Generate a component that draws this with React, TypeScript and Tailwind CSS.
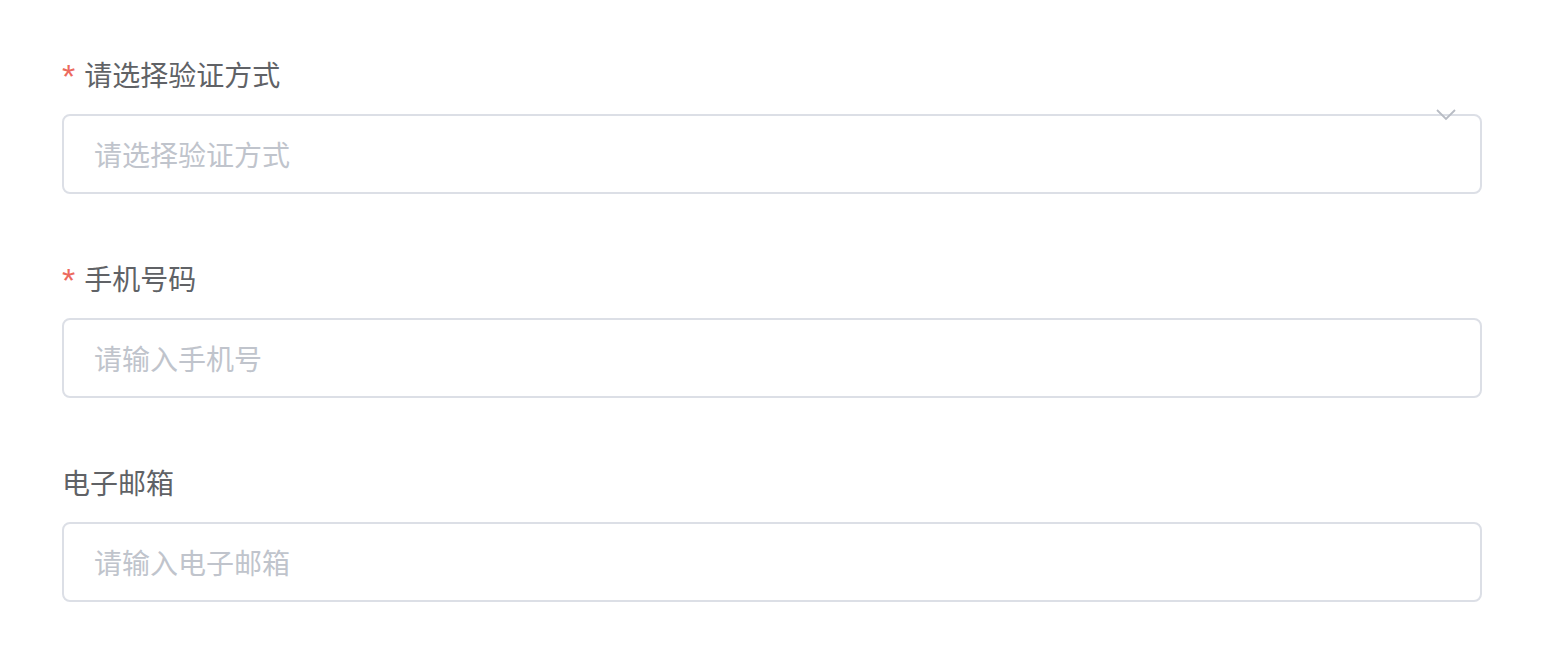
import React from "react";

const font = { fontFamily: '"Noto Sans CJK SC", "Noto Sans", sans-serif' };

function Label({ text, required }: { text: string; required?: boolean }) {
  return (
    <div className="h-[40px] flex items-center text-[28px] text-[#606266] leading-[40px]">
      {required && (
        <span
          className="text-[#ec6a5e] mr-[9px] text-[34px] leading-[40px] pt-[4px]"
          style={{ fontFamily: '"Liberation Sans", Arial, sans-serif' }}
        >
          *
        </span>
      )}
      <span>{text}</span>
    </div>
  );
}

function Field({ placeholder, chevron }: { placeholder: string; chevron?: boolean }) {
  return (
    <div className="relative mt-[20px] h-[80px] w-[1420px] rounded-[8px] border-2 border-[#dcdfe6] bg-white flex items-center pl-[31px]">
      <span className="text-[28px] text-[#c0c4cc] -ml-[1px]">{placeholder}</span>
      {chevron && (
        <svg
          className="absolute right-[23px] top-[-8px]"
          width="22"
          height="16"
          viewBox="0 0 22 16"
          fill="none"
        >
          <polyline points="2,2 11,11 20,2" stroke="#b8bcc4" strokeWidth="1.8" fill="none" />
        </svg>
      )}
    </div>
  );
}

export default function App() {
  return (
    <div className="w-[1548px] h-[650px] bg-white pl-[62px] pt-[54px]" style={font}>
      <div className="mb-[64px]">
        <Label text="请选择验证方式" required />
        <Field placeholder="请选择验证方式" chevron />
      </div>
      <div className="mb-[64px]">
        <Label text="手机号码" required />
        <Field placeholder="请输入手机号" />
      </div>
      <div>
        <Label text="电子邮箱" />
        <Field placeholder="请输入电子邮箱" />
      </div>
    </div>
  );
}
